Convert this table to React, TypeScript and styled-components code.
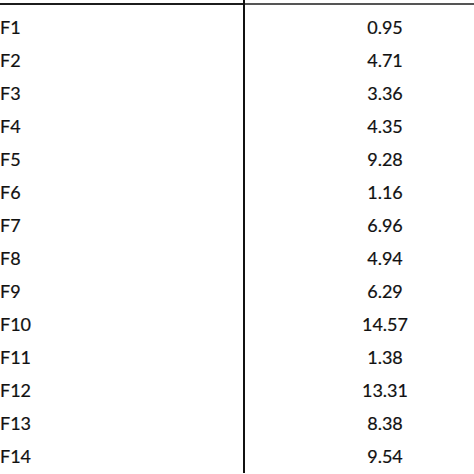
import styled, { createGlobalStyle } from "styled-components";

const GlobalStyle = createGlobalStyle`
  html, body {
    margin: 0;
    padding: 0;
    background: #fff;
    overflow: hidden;
  }
  body {
    font-family: Lato, "Open Sans", sans-serif;
    color: #111;
  }
`;

const rows = [
  ["F1", "0.95"],
  ["F2", "4.71"],
  ["F3", "3.36"],
  ["F4", "4.35"],
  ["F5", "9.28"],
  ["F6", "1.16"],
  ["F7", "6.96"],
  ["F8", "4.94"],
  ["F9", "6.29"],
  ["F10", "14.57"],
  ["F11", "1.38"],
  ["F12", "13.31"],
  ["F13", "8.38"],
  ["F14", "9.54"],
];

// the table is wider than the frame, so the value column is cut at the right edge
const Frame = styled.div`
  width: 474px;
  height: 474px;
  overflow: hidden;
`;

const Table = styled.div`
  display: flex;
`;

const Column = styled.div<{ $divider?: boolean; $width: number }>`
  display: flex;
  flex-direction: column;
  width: ${(p) => p.$width}px;
  flex-shrink: 0;
  border-left: ${(p) => (p.$divider ? "2px solid #111" : "none")};
`;

const HeadCap = styled.div<{ $tone: string }>`
  height: 3px;
  border-bottom: 2px solid ${(p) => p.$tone};
`;

const Body = styled.div`
  padding-top: 6px;
`;

const Cell = styled.div<{ $center?: boolean }>`
  height: 33px;
  line-height: 33px;
  font-size: 18px;
  -webkit-text-stroke: 0.2px #111;
  text-align: ${(p) => (p.$center ? "center" : "left")};
  white-space: nowrap;
`;

export default function App() {
  return (
    <Frame>
      <GlobalStyle />
      <Table>
        <Column $width={243}>
          <HeadCap $tone="#1c1c1c" />
          <Body>
            {rows.map(([label]) => (
              <Cell key={label}>{label}</Cell>
            ))}
          </Body>
        </Column>
        <Column $width={280} $divider>
          <HeadCap $tone="#555" />
          <Body>
            {rows.map(([label, value]) => (
              <Cell key={label} $center>
                {value}
              </Cell>
            ))}
          </Body>
        </Column>
      </Table>
    </Frame>
  );
}
